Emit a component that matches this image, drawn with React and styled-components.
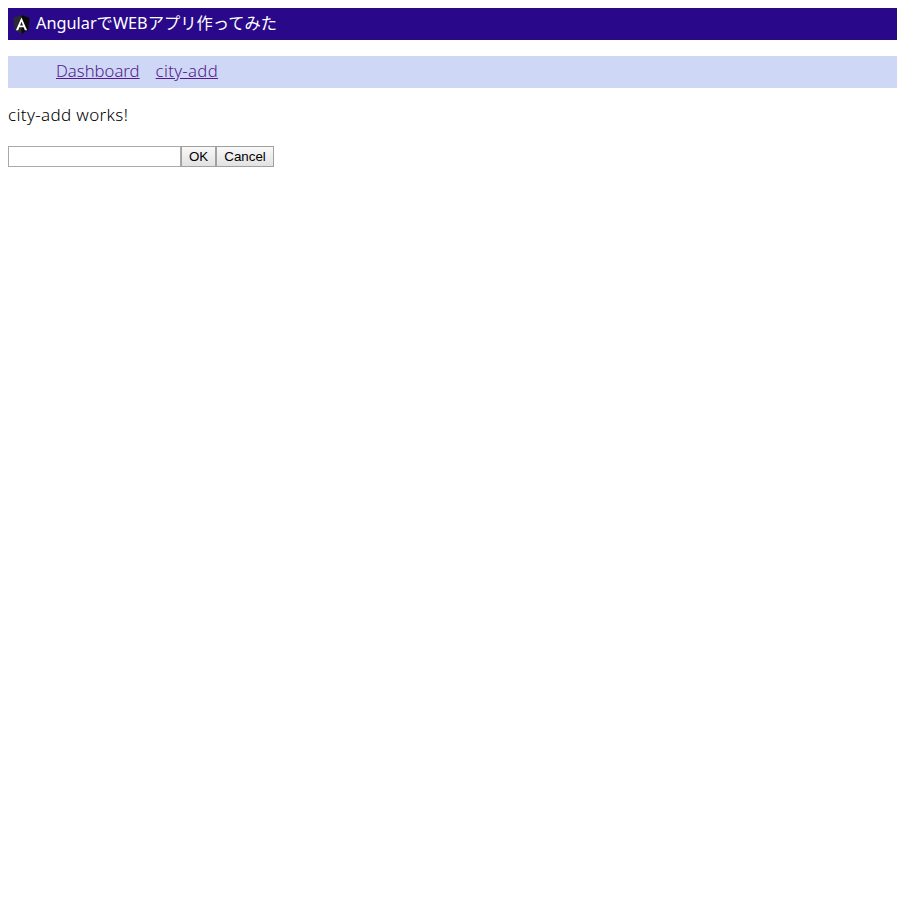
import React from 'react'
import styled, { createGlobalStyle } from 'styled-components'

const GlobalStyle = createGlobalStyle`
  html, body {
    margin: 0;
    background: #fff;
  }
  body {
    margin: 8px;
    font-family: "Noto Sans", "Noto Sans CJK JP", sans-serif;
    font-size: 16px;
    color: #000;
  }
`

const Header = styled.header`
  display: flex;
  align-items: center;
  height: 32px;
  padding-left: 5px;
  padding-bottom: 4px;
  box-sizing: border-box;
  background: #29098a;
  color: #fff;
  font-size: 16.3px;
`

const Logo = styled.svg`
  width: 17px;
  height: 19px;
  margin-right: 6px;
  margin-bottom: -4px;
  flex: none;
`

const Nav = styled.nav`
  display: flex;
  align-items: center;
  gap: 16px;
  height: 32px;
  margin-top: 16px;
  padding-left: 48px;
  padding-bottom: 3px;
  box-sizing: border-box;
  background: #ced7f5;
  font-size: 16.7px;
`

const NavLink = styled.a`
  color: #551a8b;
  font-weight: 300;
  letter-spacing: ${props => props.$spacing || 0}px;
  text-decoration: underline;
`

const Message = styled.p`
  margin: 16px 0;
  line-height: 22px;
  font-size: 17px;
  letter-spacing: 0.35px;
  color: #000;
  font-weight: 300;
`

const Form = styled.form`
  display: flex;
  align-items: stretch;
  height: 21px;
  margin-top: 20px;
`

const TextInput = styled.input`
  box-sizing: border-box;
  width: 173px;
  height: 21px;
  padding: 1px 2px;
  border: 1px solid #a9a9a9;
  background: #fff;
`

const Button = styled.button`
  box-sizing: border-box;
  height: 21px;
  padding: 0 7px;
  border: 1px solid #a0a0a0;
  background: linear-gradient(#f8f8f8, #e2e2e2);
  color: #000;
  font-family: "Liberation Sans", Arial, sans-serif;
  font-size: 13.33px;
  line-height: 19px;
`

export default function App() {
  return (
    <>
      <GlobalStyle />
      <Header>
        <Logo viewBox="0 0 17 20">
          <path d="M8.5 0 L0 3 L1.3 15.5 L8.5 20 L15.7 15.5 L17 3 Z" fill="#2a2a30" />
          <path d="M8.5 0 L17 3 L15.7 15.5 L8.5 20 Z" fill="#0a0a0c" />
          <path d="M8.5 2.5 L2.6 16 H5 L6.2 13 H10.8 L12 16 H14.4 Z M7 11 L8.5 7.2 L10 11 Z" fill="#fff" fillRule="evenodd" />
        </Logo>
        AngularでWEBアプリ作ってみた
      </Header>
      <Nav>
        <NavLink href="#dashboard">Dashboard</NavLink>
        <NavLink href="#city-add" $spacing={0.35}>city-add</NavLink>
      </Nav>
      <Message>city-add works!</Message>
      <Form onSubmit={e => e.preventDefault()}>
        <TextInput type="text" />
        <Button type="submit">OK</Button>
        <Button type="button">Cancel</Button>
      </Form>
    </>
  )
}
